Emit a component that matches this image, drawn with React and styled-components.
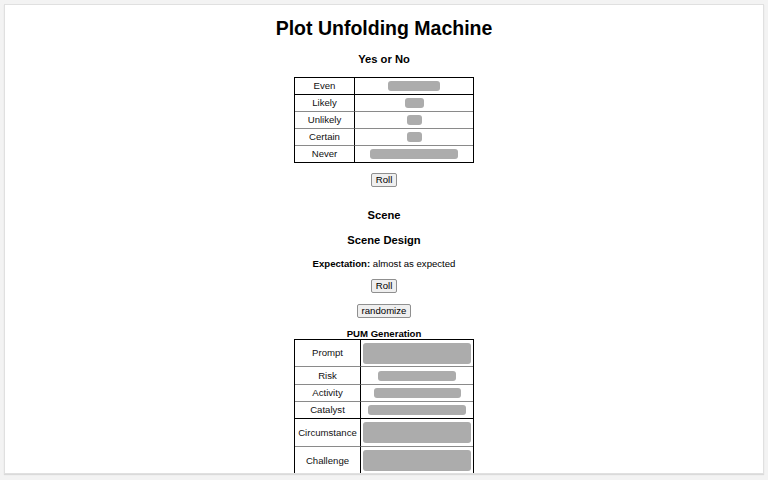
import styled, { createGlobalStyle } from "styled-components"

const GlobalStyle = createGlobalStyle`
    html, body {
        margin: 0;
        padding: 0;
        background: #f3f3f3;
        font-family: "Liberation Sans", Arial, sans-serif;
        color: #000;
    }
`

const Page = styled.div`
    padding: 4px 4px 0;
    height: 480px;
    box-sizing: border-box;
    overflow: hidden;
`

const Panel = styled.main`
    background: #fff;
    border: 1px solid #e0e0e0;
    box-shadow: 0 1px 1px rgba(0,0,0,0.1);
    height: 470px;
    box-sizing: border-box;
    overflow: hidden;
    display: flex;
    flex-direction: column;
    align-items: center;
`

const Title = styled.h1`
    margin: 12px 0 0;
    font-size: 19.5px;
    line-height: 22px;
    font-weight: bold;
`

const Heading = styled.h3`
    margin: ${({top}) => top}px 0 0;
    font-size: 11.2px;
    line-height: 13px;
    font-weight: bold;
`

const SmallHeading = styled.h4`
    margin: ${({top}) => top}px 0 0;
    font-size: 9.6px;
    line-height: 11px;
    font-weight: bold;
`

const Text = styled.p`
    margin: ${({top}) => top}px 0 0;
    font-size: 9.6px;
    line-height: 11px;
    b { font-weight: bold; }
`

const Button = styled.button`
    margin-top: ${({top}) => top}px;
    height: 14px;
    padding: 0 4px;
    font-family: inherit;
    font-size: 9.6px;
    line-height: 12px;
    color: #000;
    background: #efefef;
    border: 1px solid #8f8f8f;
    border-radius: 2px;
`

const Table = styled.table`
    margin-top: ${({top}) => top}px;
    border-collapse: separate;
    border-spacing: 0;
    border: 1px solid #000;
    width: 180px;
    font-size: 9.6px;
`

const Label = styled.td`
    width: ${({w}) => w}px;
    height: ${({h}) => h}px;
    padding: 0;
    line-height: 10px;
    text-align: center;
    color: #111;
    border-right: 1px solid #000;
    border-top: ${({first, strong}) => first ? "none" : `1px solid ${strong ? "#000" : "#8a8a8a"}`};
`

const Value = styled.td`
    padding: 0;
    height: ${({h}) => h}px;
    text-align: center;
    vertical-align: middle;
    border-top: ${({first, strong}) => first ? "none" : `1px solid ${strong ? "#000" : "#8a8a8a"}`};
`

const Bar = styled.div`
    margin: 0 auto;
    height: ${({tall}) => tall ? 21 : 10}px;
    background: #acacac;
    border-radius: 3px;
`

const yesNo = [
    {label: "Even", w: 52},
    {label: "Likely", w: 19, strong: true},
    {label: "Unlikely", w: 15},
    {label: "Certain", w: 15},
    {label: "Never", w: 88},
]

const pum = [
    {label: "Prompt", w: 108, h: 26, tall: true},
    {label: "Risk", w: 78, h: 17},
    {label: "Activity", w: 87, h: 16},
    {label: "Catalyst", w: 98, h: 16},
    {label: "Circumstance", w: 108, h: 27, tall: true, strong: true},
    {label: "Challenge", w: 108, h: 27, tall: true},
]

export default function App() {
    return(
        <>
            <GlobalStyle />
            <Page>
                <Panel>
                    <Title>Plot Unfolding Machine</Title>
                    <Heading top={13.5}>Yes or No</Heading>
                    <Table top={11.5}>
                        <tbody>
                            {yesNo.map((r, i) => (
                                <tr key={r.label}>
                                    <Label w={59} h={16} first={i === 0} strong={r.strong}>{r.label}</Label>
                                    <Value h={16} first={i === 0} strong={r.strong}>
                                        <Bar style={{width: r.w}} />
                                    </Value>
                                </tr>
                            ))}
                        </tbody>
                    </Table>
                    <Button top={10}>Roll</Button>

                    <Heading top={21.5}>Scene</Heading>
                    <Heading top={12}>Scene Design</Heading>
                    <Text top={11}><b>Expectation:</b> almost as expected</Text>
                    <Button top={10.5}>Roll</Button>
                    <Button top={11}>randomize</Button>

                    <SmallHeading top={9.5}>PUM Generation</SmallHeading>
                    <Table top={0.5}>
                        <tbody>
                            {pum.map((r, i) => (
                                <tr key={r.label}>
                                    <Label w={65} h={r.h} first={i === 0} strong={r.strong}>{r.label}</Label>
                                    <Value h={r.h} first={i === 0} strong={r.strong}>
                                        <Bar tall={r.tall} style={{width: r.w}} />
                                    </Value>
                                </tr>
                            ))}
                        </tbody>
                    </Table>
                </Panel>
            </Page>
        </>
    )
}
